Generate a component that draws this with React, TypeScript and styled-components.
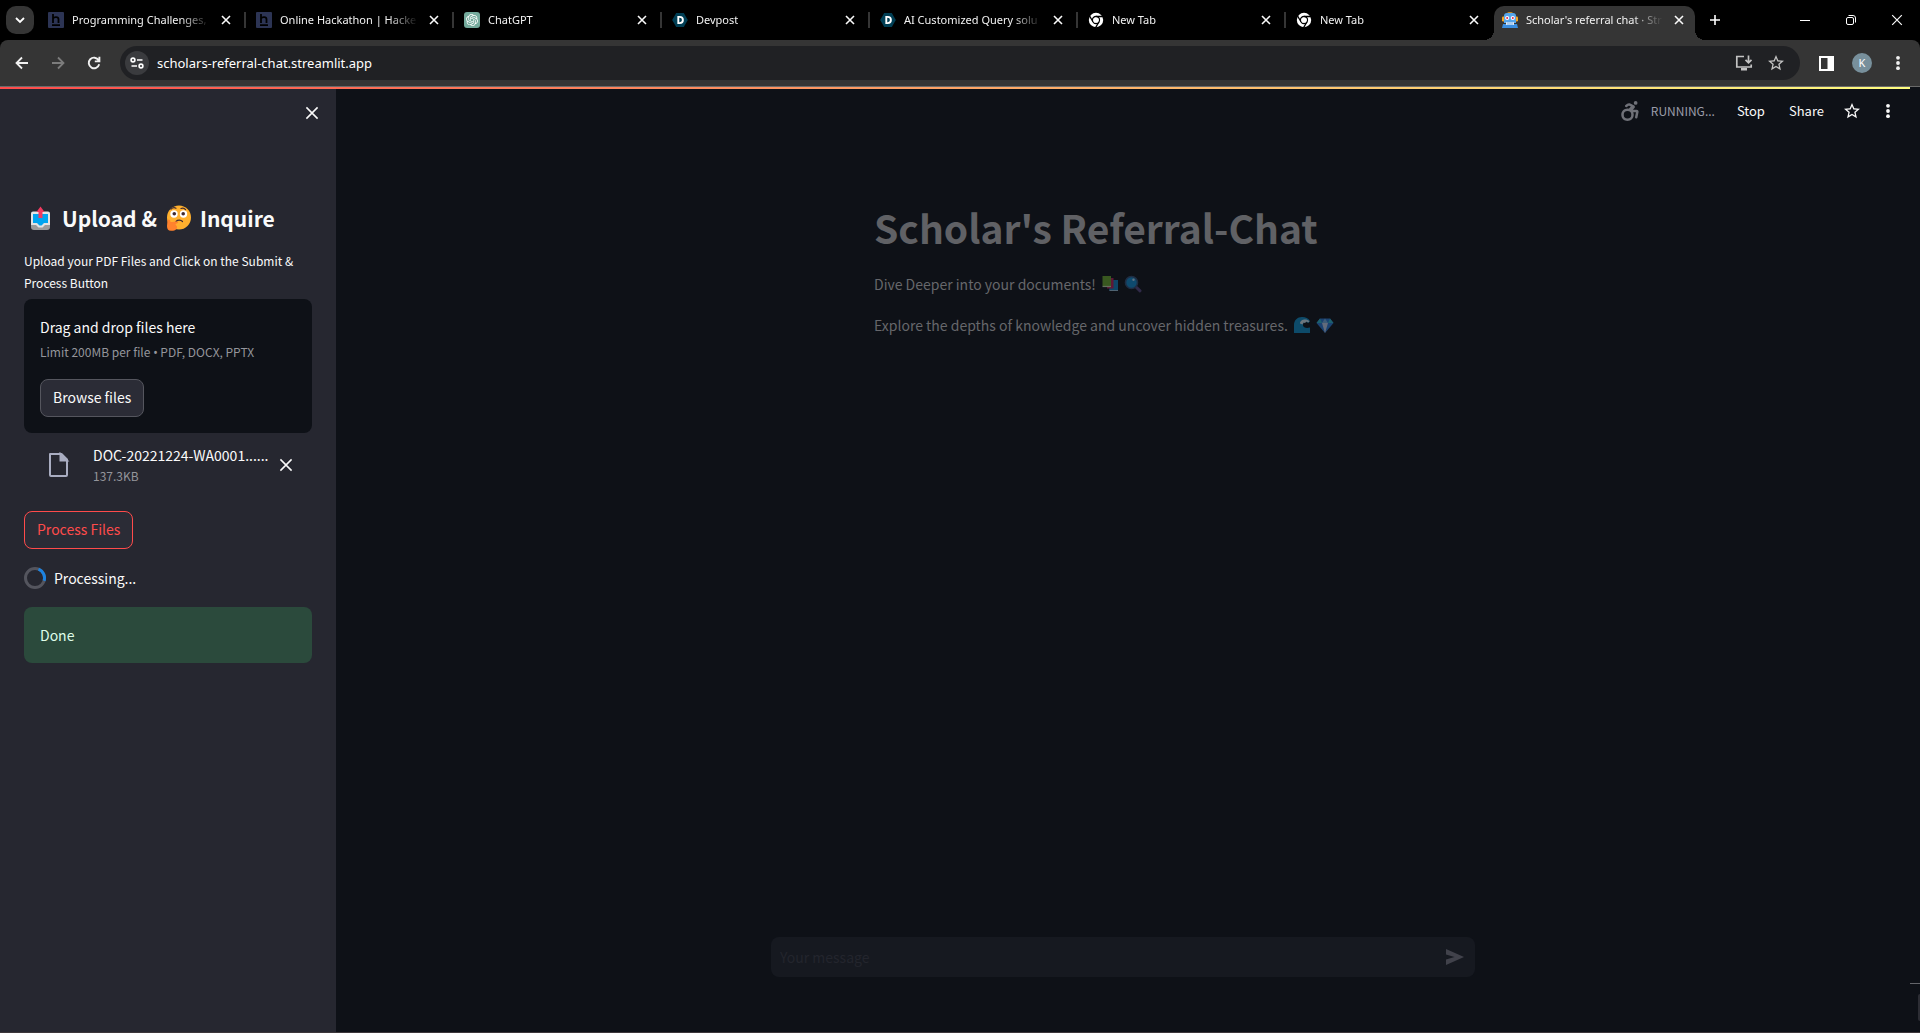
import React from "react";
import styled, { createGlobalStyle, css, keyframes } from "styled-components";
import { SiOpenai } from "react-icons/si";
import { FaWheelchairMove } from "react-icons/fa6";

const APP_FONT = '"Noto Sans CJK SC", "Noto Sans", sans-serif';
const CHROME_FONT = '"Noto Sans", "Open Sans", sans-serif';

const GlobalStyle = createGlobalStyle`
  *, *::before, *::after { box-sizing: border-box; }
  body { margin: 0; background: #0e1117; color: #fafafa; font-family: ${APP_FONT}; }
  button { margin: 0; padding: 0; border: 0; background: none; color: inherit; font: inherit; cursor: pointer; }
  h1, h2, p, ul { margin: 0; padding: 0; }
  svg { display: block; flex: none; }
`;

const Page = styled.div`
  display: flex;
  flex-direction: column;
  min-height: 100vh;
`;

/* ---------- browser window ---------- */

const TabStrip = styled.div`
  display: flex;
  align-items: center;
  height: 40px;
  background: #000;
  font-family: ${CHROME_FONT};
  font-size: 11px;
  line-height: 16px;
`;

const TabSearch = styled.button`
  display: grid;
  place-items: center;
  flex: none;
  width: 28px;
  height: 28px;
  margin: 0 4px 0 6px;
  border-radius: 10px;
  background: #353535;
`;

const Tabs = styled.ul`
  display: flex;
  flex: 0 1 1657px;
  align-self: stretch;
  min-width: 0;
  list-style: none;
`;

const Tab = styled.li<{ $active?: boolean }>`
  display: flex;
  align-items: center;
  flex: 0 1 208px;
  min-width: 0;
  padding: 0 10px;
  position: relative;

  &::after {
    content: "";
    position: absolute;
    right: 0;
    width: 2px;
    height: 16px;
    background: #353535;
  }

  &:nth-last-child(2)::after { display: none; }

  ${(p) =>
    p.$active &&
    css`
      flex-basis: 201px;
      margin-top: 6px;
      padding: 0 8px 6px;
      border-radius: 10px 10px 0 0;
      background: #353535;

      &::before,
      &::after {
        content: "";
        position: absolute;
        bottom: 0;
        width: 10px;
        height: 10px;
      }
      &::before {
        left: -10px;
        background: radial-gradient(circle at 0 0, transparent 10px, #353535 10px);
      }
      &::after {
        right: -10px;
        background: radial-gradient(circle at 100% 0, transparent 10px, #353535 10px);
      }
    `}
`;

const TabTitle = styled.span`
  flex: 1;
  min-width: 0;
  margin: 0 8px;
  overflow: hidden;
  white-space: nowrap;
  color: #f2f2f2;
  mask-image: linear-gradient(to right, #000 calc(100% - 30px), transparent);
`;

const TabClose = styled.button`
  display: grid;
  place-items: center;
  flex: none;
  width: 16px;
  height: 16px;
  margin-right: 2px;

  ${Tab}:last-child & { margin-right: 0; }
`;

const NewTab = styled.button`
  display: grid;
  place-items: center;
  flex: none;
  width: 28px;
  height: 28px;
  margin-left: 6px;
`;

const WindowControls = styled.div`
  display: flex;
  align-self: stretch;
  margin-left: auto;
`;

const WindowButton = styled.button`
  display: grid;
  place-items: center;
  width: 46px;
`;

const Toolbar = styled.div`
  display: flex;
  align-items: center;
  height: 47px;
  padding: 0 10px;
  border-bottom: 1px solid #6a6a6a;
  border-radius: 8px 8px 0 0;
  background: #353535;
`;

const ToolbarBack = styled.div`
  background: #000;
`;

const ToolButton = styled.button`
  display: grid;
  place-items: center;
  flex: none;
  width: 24px;
  height: 24px;
  color: #f1f1f1;
`;

const NavButtons = styled.div`
  display: flex;
  gap: 12px;
  margin-right: 14px;
`;

const AddressBar = styled.form`
  display: flex;
  align-items: center;
  flex: 1;
  height: 34px;
  padding: 0 12px 0 5px;
  border-radius: 17px;
  background: #202124;
`;

const SiteInfo = styled(ToolButton)`
  border-radius: 50%;
  background: #3a3b3e;
`;

const Address = styled.input`
  flex: 1;
  min-width: 0;
  padding: 0 8px;
  border: 0;
  outline: 0;
  background: none;
  color: #fff;
  font: 13px/20px ${CHROME_FONT};
`;

const AddressActions = styled.div`
  display: flex;
  gap: 8px;
`;

const ToolbarEnd = styled.div`
  display: flex;
  gap: 12px;
  margin-left: 14px;
`;

const Avatar = styled.span`
  display: grid;
  place-items: center;
  width: 20px;
  height: 20px;
  border-radius: 50%;
  background: #78909c;
  color: #fff;
  font: 11px/20px ${CHROME_FONT};
`;

/* ---------- app ---------- */

const Content = styled.div`
  display: flex;
  flex: 1;
  position: relative;
  border-bottom: 1px solid #3d373b;
`;

const Decoration = styled.div`
  position: absolute;
  top: 0;
  left: 0;
  right: 10px;
  height: 2px;
  background: linear-gradient(90deg, #ff4b4b, #fffd80);
`;

const Sidebar = styled.aside`
  display: flex;
  flex-direction: column;
  align-items: flex-start;
  flex: none;
  width: 336px;
  padding: 15px 24px 24px;
  background: #262730;
`;

const CloseSidebar = styled.button`
  display: grid;
  place-items: center;
  align-self: flex-end;
  width: 22px;
  height: 22px;
  margin-right: -11px;
`;

const SidebarTitle = styled.h2`
  display: flex;
  align-items: center;
  gap: 5px;
  margin-top: 79px;
  font-size: 21px;
  font-weight: 600;
  line-height: 30px;
  white-space: nowrap;
`;

const EmojiBox = styled.span`
  display: grid;
  place-items: center;
  width: 33px;
`;

const UploadLabel = styled.label`
  margin-top: 17px;
  font-size: 12px;
  line-height: 22px;
`;

const DropZone = styled.section`
  align-self: stretch;
  margin-top: 5px;
  padding: 16px;
  border-radius: 8px;
  background: #0e1117;
`;

const DropTitle = styled.p`
  font-size: 14px;
  line-height: 24px;
`;

const Muted = styled.p`
  color: #94959b;
  font-size: 12px;
  line-height: 20px;
`;

const Button = styled.button<{ $accent?: boolean }>`
  height: 38px;
  padding: 0 12px 2px;
  border: 1px solid ${(p) => (p.$accent ? "#ff4b4b" : "#55565e")};
  border-radius: 8px;
  background: #2b2c36;
  color: ${(p) => (p.$accent ? "#ff4b4b" : "#fafafa")};
  font-size: 14px;
  line-height: 24px;
`;

const DropLimit = styled(Muted)`
  margin: 3px 0 16px;
`;

const Bullet = styled.span`
  font-family: "Noto Sans", sans-serif;
`;

const FileRow = styled.div`
  display: flex;
  align-items: center;
  align-self: stretch;
  margin: 11px 0 25px;
  padding: 0 16px 0 22px;
`;

const FileInfo = styled.div`
  flex: 1;
  min-width: 0;
  margin: 0 4px 0 22px;
`;

const FileName = styled.p`
  overflow: hidden;
  font-size: 14px;
  line-height: 22px;
  white-space: nowrap;
`;

const IconButton = styled.button`
  display: grid;
  place-items: center;
  width: 20px;
  height: 20px;
`;

const Status = styled.div`
  display: flex;
  align-items: center;
  gap: 8px;
  margin: 18px 0;
  font-size: 14px;
  line-height: 22px;
`;

const turn = keyframes`from { transform: rotate(0) } to { transform: rotate(360deg) }`;

const Spinner = styled.svg`
  animation: ${turn} 1s linear infinite paused;
`;

const Success = styled.div`
  align-self: stretch;
  padding: 16px;
  border-radius: 8px;
  background: #2b4a3c;
  color: #dffde9;
  font-size: 14px;
  line-height: 24px;
`;

const Main = styled.main`
  display: flex;
  flex-direction: column;
  flex: 1;
  min-width: 0;
  padding-bottom: 55px;
  background: #0e1117;
`;

const AppHeader = styled.header`
  display: flex;
  align-items: center;
  justify-content: flex-end;
  gap: 16px;
  height: 48px;
  padding-right: 22px;
  font-size: 13px;
  line-height: 20px;
`;

const Running = styled.span`
  display: flex;
  align-items: center;
  gap: 11px;
  color: #9a9ca8;
  font-size: 12px;

  svg { color: #6f7178; }
`;

const HeaderButton = styled.button`
  padding: 0 2px 0 6px;
`;

const Column = styled.div`
  width: calc(100% - 10px);
  max-width: 714px;
  margin: 0 auto;
  padding-right: 10px;
`;

const Intro = styled.div`
  padding: 68px 0 0 103px;
  color: #606165;
  white-space: nowrap;
`;

const Title = styled.h1`
  margin-bottom: 20px;
  font-size: 39px;
  font-weight: 700;
  line-height: 48px;
`;

const Lead = styled.p`
  display: flex;
  align-items: center;
  gap: 5px;
  margin-bottom: 15px;
  color: #66676b;
  font-size: 14px;
  line-height: 26px;

  svg { opacity: 0.45; }
`;

const Bottom = styled(Column)`
  margin-top: auto;
`;

const ChatBox = styled.form`
  display: flex;
  align-items: center;
  height: 40px;
  padding: 0 10px 0 9px;
  border-radius: 8px;
  background: #161920;
`;

const ChatInput = styled.input`
  flex: 1;
  min-width: 0;
  padding: 0;
  border: 0;
  outline: 0;
  background: none;
  color: #606165;
  font: 14px/24px ${APP_FONT};

  &::placeholder { color: #23252d; opacity: 1; }
`;

const EdgeLine = styled.span`
  position: absolute;
  right: 0;
  bottom: 48px;
  width: 10px;
  height: 1px;
  background: #63656a;
`;

const EdgeTab = styled.span`
  position: absolute;
  right: 0;
  bottom: 11px;
  width: 2px;
  height: 27px;
  border-radius: 2px 0 0 2px;
  background: #2c2d34;
`;

/* ---------- drawings ---------- */

const Cross = ({ size, width = 2 }: { size: number; width?: number }) => (
  <svg width={size} height={size} viewBox="0 0 10 10" stroke="currentColor" strokeWidth={width} aria-hidden>
    <path d="M1 1l8 8M9 1L1 9" />
  </svg>
);

const Dots = ({ size = 16 }: { size?: number }) => (
  <svg width={size} height={size} viewBox="0 0 16 16" fill="currentColor" aria-hidden>
    <circle cx="8" cy="2.8" r="1.9" />
    <circle cx="8" cy="8" r="1.9" />
    <circle cx="8" cy="13.2" r="1.9" />
  </svg>
);

const Star = ({ size = 16, color = "currentColor" }: { size?: number; color?: string }) => (
  <svg width={size} height={size} viewBox="2 2 20 20" fill={color} aria-hidden>
    <path d="M22 9.24l-7.19-.62L12 2 9.19 8.63 2 9.24l5.46 4.73L5.82 21 12 17.27 18.18 21l-1.63-7.03L22 9.24zM12 15.4l-3.76 2.27 1-4.28-3.32-2.88 4.38-.38L12 6.1l1.71 4.04 4.38.38-3.32 2.88 1 4.28L12 15.4z" />
  </svg>
);

const HackerEarth = () => (
  <svg width="16" height="16" viewBox="0 0 16 16" aria-hidden>
    <rect width="16" height="16" rx="1" fill="#2c3454" />
    <path d="M5 2v9M5 6.500C6 4.600 10.500 4.500 10.500 7.200V11M4 13.200h8" fill="none" stroke="#000" strokeWidth="1.800" />
  </svg>
);

const ChatGptTile = styled.span`
  display: grid;
  place-items: center;
  flex: none;
  width: 16px;
  height: 16px;
  border-radius: 3px;
  background: #74aa9c;
  color: #fff;
`;

const DevpostIcon = () => (
  <svg width="16" height="16" viewBox="0 0 16 16" aria-hidden>
    <path d="M4.200 1h7.600L15.800 8l-4 7H4.200L.2 8z" fill="#003e54" />
    <path d="M6.300 4.900h1.400c2 0 3.200 1.100 3.200 3.100s-1.200 3.100-3.200 3.100H6.300z" fill="none" stroke="#fff" strokeWidth="1.900" />
  </svg>
);

const ChromeIcon = () => (
  <svg width="16" height="16" viewBox="0 0 16 16" aria-hidden>
    <circle cx="8" cy="8" r="7.200" fill="#fff" />
    <g stroke="#000" strokeWidth="1.300" fill="none">
      <circle cx="8" cy="8" r="3.500" />
      <path d="M8 4.500h7.500M4.970 9.750L1.200 3.300M11.030 9.750L7.300 16.200" />
    </g>
    <circle cx="8" cy="8" r="2.600" fill="#fff" />
  </svg>
);

const RobotIcon = () => (
  <svg width="16" height="16" viewBox="0 0 16 16" aria-hidden>
    <path d="M4.500 1.500C5.500-.2 10.500-.2 11.500 1.500z" fill="#f5a623" />
    <rect y="4.500" width="3" height="5" rx="1.200" fill="#f5a623" />
    <rect x="13" y="4.500" width="3" height="5" rx="1.200" fill="#f5a623" />
    <path d="M2 4a3 3 0 0 1 3-3h6a3 3 0 0 1 3 3v7H2z" fill="#56a5ea" />
    <path d="M1 12h14l1 4H0z" fill="#3b8ee0" />
    <circle cx="5.200" cy="6" r="2.100" fill="#fff" />
    <circle cx="10.800" cy="6" r="2.100" fill="#fff" />
    <circle cx="5.200" cy="6" r="1" fill="#e0244e" />
    <circle cx="10.800" cy="6" r="1" fill="#e0244e" />
    <rect x="4" y="10" width="8" height="3" rx=".6" fill="#dfeaf5" />
    <path d="M6 10v3M8 10v3M10 10v3" stroke="#3b8ee0" strokeWidth=".6" />
  </svg>
);

const OutboxEmoji = () => (
  <svg width="21" height="25" viewBox="0 0 21 25" role="img" aria-label="outbox tray">
    <path d="M3 6h15l2 3v12a3 3 0 0 1-3 3H4a3 3 0 0 1-3-3V9z" fill="#9b9b9b" />
    <path d="M3 5.500h15a2 2 0 0 1 2 2V19h-5l-2.500 2.500h-4L6 19H1V7.500a2 2 0 0 1 2-2z" fill="#e3e3e3" />
    <path d="M3 8h15v9h-4l-2.500 2.500h-2L7 17H3z" fill="#00a4ef" />
    <path d="M10.500 .5l4 5.500h-2v6h-4V6h-2z" fill="#f03a5f" />
  </svg>
);

const ThinkingEmoji = () => (
  <svg width="25" height="26" viewBox="0 0 25 26" role="img" aria-label="thinking face">
    <circle cx="13" cy="12.500" r="12" fill="#ffb02e" />
    <circle cx="8" cy="9" r="3.700" fill="#fff" />
    <circle cx="17.500" cy="9" r="3.700" fill="#fff" />
    <circle cx="8.300" cy="8.800" r="1.800" fill="#402a32" />
    <circle cx="17.200" cy="8.800" r="1.800" fill="#402a32" />
    <path d="M5 4.200c1.500-1.600 3.500-1.800 5-1M15 3.500c1.500-.6 3.500-.2 4.500 1.200M10 16.500c2-2 5-1.500 6.500 0" stroke="#402a32" strokeWidth="1.200" fill="none" strokeLinecap="round" />
    <path d="M1.500 15c1.500-1.500 3 0 3 2 2 .5 7-1.500 7.500 0s-3 1.500-2.500 2.500 2 1.500 1.500 3.500-3 2.800-6 2.800S1 24 1 21z" fill="#ff822d" />
  </svg>
);

const BooksEmoji = () => (
  <svg width="18" height="18" viewBox="0 0 18 18" role="img" aria-label="books">
    <path d="M10 5h7v10.500H8z" fill="#0f84c8" />
    <path d="M8.500 15.500H17" stroke="#9fc7e0" />
    <path d="M7 3h5.500v10.500H6z" fill="#c2205c" />
    <path d="M1.500 1h8.500v10H1.500z" fill="#6faf2c" />
    <path d="M1.500 11.500H10" stroke="#cfe0b8" strokeWidth="1.200" />
  </svg>
);

const LensEmoji = () => (
  <svg width="18" height="18" viewBox="0 0 18 18" role="img" aria-label="magnifying glass">
    <path d="M11 11l5 4.800" stroke="#5a4a86" strokeWidth="3" strokeLinecap="round" />
    <circle cx="7.500" cy="7.500" r="6" fill="#0f90d8" stroke="#33507a" strokeWidth="1.600" />
    <circle cx="9.500" cy="4.800" r="1.200" fill="#bfe6ff" />
  </svg>
);

const WaveEmoji = () => (
  <svg width="18" height="18" viewBox="0 0 18 18" role="img" aria-label="wave">
    <path d="M1 17V9c0-5 3.500-8 8-8 3.500 0 6.500 1.500 8 4l-1.500 2c-3-2-6-.5-5.500 2.500.4 2.300 3.500 3 7 2V17z" fill="#0d92cf" />
    <path d="M7 7.500C7 3.500 13.500 2 16.500 5.500l-1.500 1-1.500-1L12 7l-1.500-.5-1 2z" fill="#dff1fa" />
  </svg>
);

const GemEmoji = () => (
  <svg width="18" height="18" viewBox="0 0 18 18" role="img" aria-label="gem stone">
    <path d="M4 2.500h10l3.500 4.500L9 17 .5 7z" fill="#2b7fe0" />
    <path d="M4 2.500L6 7H.5zM14 2.500L12 7h5.500z" fill="#2fc0d8" />
    <path d="M6 7h6L9 17z" fill="#c9d8f5" />
    <path d="M9 2.500L12 7H6z" fill="#79b7ee" />
  </svg>
);

/* ---------- page ---------- */

const tabs = [
  { title: "Programming Challenges,", icon: <HackerEarth /> },
  { title: "Online Hackathon | Hacke", icon: <HackerEarth /> },
  { title: "ChatGPT", icon: <ChatGptTile><SiOpenai size={12} /></ChatGptTile> },
  { title: "Devpost", icon: <DevpostIcon /> },
  { title: "AI Customized Query solu", icon: <DevpostIcon /> },
  { title: "New Tab", icon: <ChromeIcon /> },
  { title: "New Tab", icon: <ChromeIcon /> },
  { title: "Scholar's referral chat · Str", icon: <RobotIcon />, active: true },
];

const BrowserChrome = () => (
  <>
    <TabStrip>
      <TabSearch aria-label="Search tabs">
        <svg width="10" height="10" viewBox="0 0 10 10" fill="none" stroke="#fff" strokeWidth="1.800" aria-hidden>
          <path d="M1 3l4 4 4-4" />
        </svg>
      </TabSearch>
      <Tabs>
        {tabs.map((tab, i) => (
          <Tab key={i} $active={tab.active}>
            {tab.icon}
            <TabTitle>{tab.title}</TabTitle>
            <TabClose aria-label="Close tab">
              <Cross size={10} width={1.6} />
            </TabClose>
          </Tab>
        ))}
      </Tabs>
      <NewTab aria-label="New tab">
        <svg width="12" height="12" viewBox="0 0 12 12" stroke="#fff" strokeWidth="1.600" aria-hidden>
          <path d="M6 1v10M1 6h10" />
        </svg>
      </NewTab>
      <WindowControls>
        <WindowButton aria-label="Minimize">
          <svg width="10" height="10" viewBox="0 0 10 10" stroke="#fff" aria-hidden><path d="M0 5.500h10" /></svg>
        </WindowButton>
        <WindowButton aria-label="Restore">
          <svg width="10" height="10" viewBox="0 0 10 10" fill="none" stroke="#fff" aria-hidden>
            <rect x=".5" y="2.500" width="7" height="7" rx="1.500" />
            <path d="M2.500 .5H7A2.500 2.500 0 0 1 9.500 3v4.500" />
          </svg>
        </WindowButton>
        <WindowButton aria-label="Close window">
          <Cross size={12} width={1} />
        </WindowButton>
      </WindowControls>
    </TabStrip>
    <ToolbarBack>
      <Toolbar>
        <NavButtons>
          <ToolButton aria-label="Back">
            <svg width="14" height="14" viewBox="0 0 14 14" fill="none" stroke="#f1f1f1" strokeWidth="1.800" aria-hidden>
              <path d="M13 7H2M7 1.500L1.500 7 7 12.500" />
            </svg>
          </ToolButton>
          <ToolButton aria-label="Forward">
            <svg width="14" height="14" viewBox="0 0 14 14" fill="none" stroke="#7c7c7c" strokeWidth="1.800" aria-hidden>
              <path d="M1 7h11M7 1.500L12.500 7 7 12.500" />
            </svg>
          </ToolButton>
          <ToolButton aria-label="Reload">
            <svg width="14" height="14" viewBox="0 0 14 14" fill="none" stroke="#f1f1f1" strokeWidth="1.900" aria-hidden>
              <path d="M11.600 4.200A5.300 5.300 0 1 0 12.200 8.300M12.400 .8v4.600H7.800" />
            </svg>
          </ToolButton>
        </NavButtons>
        <AddressBar onSubmit={(e) => e.preventDefault()}>
          <SiteInfo type="button" aria-label="View site information">
            <svg width="14" height="12" viewBox="0 0 14 12" fill="none" stroke="#fff" strokeWidth="1.600" aria-hidden>
              <circle cx="3" cy="3" r="1.900" />
              <path d="M7 3h5.500M1.500 9H7" />
              <circle cx="11" cy="9" r="1.900" />
            </svg>
          </SiteInfo>
          <Address aria-label="Address and search bar" defaultValue="scholars-referral-chat.streamlit.app" />
          <AddressActions>
            <ToolButton type="button" aria-label="Install app">
              <svg width="18" height="16" viewBox="0 0 18 16" fill="none" stroke="#c3c3c3" strokeWidth="1.700" aria-hidden>
                <path d="M9 1.500H1.800V12h14.400V9.500M13.500 .5v7M10.500 4.800l3 3 3-3" />
                <path d="M6 13h6v2.500H6z" fill="#c3c3c3" stroke="none" />
              </svg>
            </ToolButton>
            <ToolButton type="button" aria-label="Bookmark this tab"><Star color="#c3c3c3" /></ToolButton>
          </AddressActions>
        </AddressBar>
        <ToolbarEnd>
          <ToolButton aria-label="Side panel">
            <svg width="15" height="15" viewBox="0 0 15 15" aria-hidden>
              <path d="M1 1h13v13H1z" fill="none" stroke="#fff" strokeWidth="2" />
              <path d="M8.500 1H14v13H8.500z" fill="#fff" />
            </svg>
          </ToolButton>
          <ToolButton aria-label="Profile"><Avatar>K</Avatar></ToolButton>
          <ToolButton aria-label="Browser menu"><Dots /></ToolButton>
        </ToolbarEnd>
      </Toolbar>
    </ToolbarBack>
  </>
);

const UploadSidebar = () => (
  <Sidebar>
    <CloseSidebar aria-label="Close sidebar"><Cross size={14} width={1.1} /></CloseSidebar>
    <SidebarTitle>
      <EmojiBox><OutboxEmoji /></EmojiBox>
      <span>Upload &amp;</span>
      <EmojiBox><ThinkingEmoji /></EmojiBox>
      <span>Inquire</span>
    </SidebarTitle>
    <UploadLabel htmlFor="browse">Upload your PDF Files and Click on the Submit &amp; Process Button</UploadLabel>
    <DropZone>
      <DropTitle>Drag and drop files here</DropTitle>
      <DropLimit>Limit 200MB per file <Bullet>•</Bullet> PDF, DOCX, PPTX</DropLimit>
      <Button id="browse">Browse files</Button>
    </DropZone>
    <FileRow>
      <svg width="25" height="26" viewBox="0 0 25 26" fill="none" stroke="#a9adc1" strokeWidth="2" aria-hidden>
        <path d="M4 2h11.500L21 7.500V23a1 1 0 0 1-1 1H5a1 1 0 0 1-1-1z" strokeLinejoin="round" />
        <path d="M14.500 2v6.500H21z" fill="#a9adc1" />
      </svg>
      <FileInfo>
        <FileName>DOC-20221224-WA0001......</FileName>
        <Muted>137.3KB</Muted>
      </FileInfo>
      <IconButton aria-label="Remove file"><Cross size={14} width={1.1} /></IconButton>
    </FileRow>
    <Button $accent>Process Files</Button>
    <Status role="status">
      <Spinner width="22" height="22" viewBox="0 0 22 22" fill="none" strokeWidth="3" aria-hidden>
        <circle cx="11" cy="11" r="9.500" stroke="#54555e" />
        <path d="M14.500 2.200A9.500 9.500 0 0 1 20.100 13.800" stroke="#1c83e1" />
      </Spinner>
      <span>Processing...</span>
    </Status>
    <Success role="alert">Done</Success>
  </Sidebar>
);

export default function App() {
  return (
    <Page>
      <GlobalStyle />
      <BrowserChrome />
      <Content>
        <UploadSidebar />
        <Main>
          <AppHeader>
            <Running><FaWheelchairMove size={20} />RUNNING...</Running>
            <HeaderButton>Stop</HeaderButton>
            <HeaderButton>Share</HeaderButton>
            <IconButton aria-label="Favorite"><Star /></IconButton>
            <IconButton aria-label="App menu"><Dots /></IconButton>
          </AppHeader>
          <Column>
            <Intro>
              <Title>Scholar's Referral-Chat</Title>
              <Lead>Dive Deeper into your documents! <BooksEmoji /><LensEmoji /></Lead>
              <Lead>Explore the depths of knowledge and uncover hidden treasures. <WaveEmoji /><GemEmoji /></Lead>
            </Intro>
          </Column>
          <Bottom>
            <ChatBox onSubmit={(e) => e.preventDefault()}>
              <ChatInput aria-label="Your message" placeholder="Your message" />
              <IconButton type="submit" aria-label="Send">
                <svg width="18" height="16" viewBox="0 0 18 16" aria-hidden>
                  <path d="M0 0l18 8L0 16v-5.500L8.500 8 0 5.500z" fill="#41424b" />
                </svg>
              </IconButton>
            </ChatBox>
          </Bottom>
        </Main>
        <Decoration />
        <EdgeLine />
        <EdgeTab />
      </Content>
    </Page>
  );
}
